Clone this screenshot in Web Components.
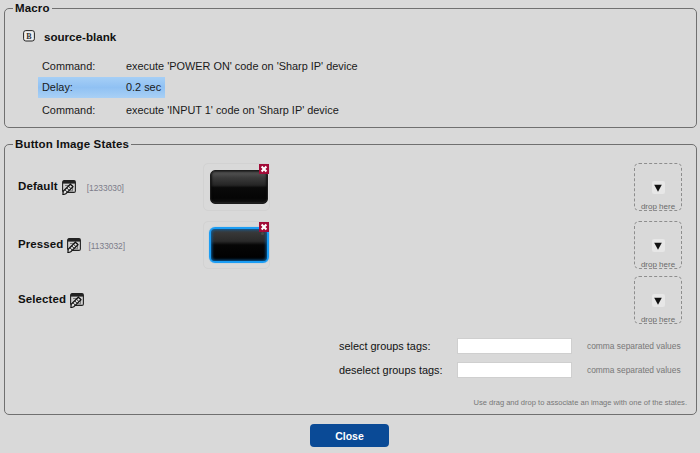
<!DOCTYPE html>
<html><head><meta charset="utf-8">
<style>
html,body{margin:0;padding:0;background:#d9d9d9}
body{width:700px;height:453px;overflow:hidden;font-family:"Liberation Sans",Arial,sans-serif;color:#111}
</style></head><body>
<template id="t-panel"><style>
:host{display:block;position:relative;box-sizing:border-box;border:1px solid #707070;border-radius:5px;margin:0 3px 0 4px}
.lg{position:absolute;left:8px;top:-8px;background:#d9d9d9;padding:0 2px;font:bold 11.5px/15px "Liberation Sans",sans-serif;color:#111;letter-spacing:.15px}
</style><div class="lg"><slot name="legend"></slot></div><slot></slot></template>

<template id="t-cmd"><style>
:host{display:grid;grid-template-columns:84px auto;width:max-content;height:22px;align-items:center;padding:0 4px;font:10.9px "Liberation Sans",sans-serif;color:#1a1a1a}
:host([hl]){background:linear-gradient(#a6cff6,#90c1f3 50%,#a9d0f5);min-width:118px;height:21px;margin-bottom:1px;padding-bottom:1px;box-sizing:border-box}
</style><span><slot name="k"></slot></span><span><slot></slot></span></template>

<template id="t-edit"><style>
:host{display:inline-block;width:14px;height:15px;vertical-align:middle}
svg{display:block}
</style><svg width="14" height="15" viewBox="0 0 14 15"><rect x=".6" y=".6" width="12.8" height="11.8" rx="1.5" fill="#d0d0d0" stroke="#222" stroke-width="1.1"/><rect x="1" y=".8" width="12" height="2.8" fill="#222"/><path d="M3 5.5h8M10.5 7v3.5M7 10.8h4" stroke="#777" stroke-width="1" fill="none"/><path d="M1.2 11.2L8.4 4.2l2.6 2.5-7.2 7.1-2.9 .9z" fill="#e4e4e4" stroke="#111" stroke-width="1.2"/><path d="M3 9.8l2.4 2.4M4.8 8l2.4 2.4M6.6 6.3L9 8.7" stroke="#222" stroke-width="1"/></svg></template>

<template id="t-thumb"><style>
:host{display:block;position:relative;box-sizing:border-box;width:67px;height:48px;border:1px solid #d2d2d2;border-radius:5px;background:#d9d9d9}
.b{position:absolute;left:6px;top:6px;width:58px;height:34px;border-radius:5px;box-sizing:border-box;border:1px solid #1c1c1c;
 background:linear-gradient(#5a5a5a 0,#3c3c3c 20%,#252525 44%,#0a0a0a 52%,#050505 85%,#141414 100%);box-shadow:inset 0 0 2px 1px rgba(10,10,10,.75),inset 0 -1px 1px #3a3a3a}
:host([active]) .b{left:5px;top:5px;width:60px;height:36px;border:2px solid #1b9df4;border-radius:6px;box-shadow:0 0 1px #4ab3f6,inset 0 0 3px 1px #0c5f9e;
 background:linear-gradient(#3d3d3d 0,#2a2a2a 38%,#060606 50%,#000 100%)}
:host([active]) .b::after{content:"";position:absolute;right:3px;top:3px;width:3px;height:3px;border-radius:50%;background:#4a4a4a}
.x{position:absolute;right:0;top:0;width:10px;height:10px;background:#a10b37}
svg{display:block}
</style><div class="b"></div><div class="x"><svg width="10" height="10" viewBox="0 0 10 10"><path d="M2.6 2.6l4.8 4.8M7.4 2.6L2.6 7.4" stroke="#fff" stroke-width="2.1"/></svg></div></template>

<template id="t-drop"><style>
:host{display:flex;flex-direction:column;align-items:center;box-sizing:border-box;width:48px;height:48px;border:1px dashed #8d8d8d;border-radius:5px;font:8px/10px "Liberation Sans",sans-serif;color:#6a6a6a}
.a{width:13px;height:13px;margin-top:17px;background:#e7e7e7;border-radius:2px;display:flex;align-items:center;justify-content:center;flex:none}
.t{margin-top:8px;white-space:nowrap}
svg{display:block}
</style><div class="a"><svg width="8" height="8" viewBox="0 0 8 8"><path d="M.2 .8h7.6L4 7.8z" fill="#111"/></svg></div><div class="t">drop here</div></template>

<template id="t-state"><style>
:host{display:grid;grid-template-columns:185px 431px 48px;align-items:start;padding-left:13px}
.l{display:flex;align-items:center;font:bold 11.5px/15px "Liberation Sans",sans-serif;color:#111;letter-spacing:.1px;margin-top:16px}
.id{font:8.4px "Liberation Sans",sans-serif;color:#7c7c8a;font-weight:normal;letter-spacing:0;position:relative;top:1.5px}
.l ::slotted(r-edit){margin-left:4px;position:relative;top:1px}
</style><div class="l"><slot name="name"></slot><span class="id"><slot name="id"></slot></span></div><div><slot name="thumb"></slot></div><div><slot name="drop"></slot></div></template>

<template id="t-tagrow"><style>
:host{display:grid;grid-template-columns:118px 115px auto;align-items:center;height:24px;margin-left:334px;font:10.9px "Liberation Sans",sans-serif;color:#111}
.i{box-sizing:border-box;width:115px;height:16px;background:#fff;border:1px solid #cfcfcf;display:block;margin:0;padding:0}
.n{font-size:8.4px;color:#777;margin-left:15px;white-space:nowrap;position:relative;top:-.5px}
</style><span><slot></slot></span><input class="i" type="text"><span class="n">comma separated values</span></template>

<template id="t-close"><style>
:host{display:block;box-sizing:border-box;width:79px;height:23px;border-radius:4px;background:#0a4a96;color:#fff;text-align:center;font:bold 10.5px/24px "Liberation Sans",sans-serif}
</style><slot></slot></template>

<template id="t-head"><style>
:host{display:flex;align-items:center;height:14px;font:bold 11.6px/14px "Liberation Sans",sans-serif;color:#111}
svg{display:block;margin-right:9px;position:relative;top:-1px}
</style><svg width="12" height="12" viewBox="0 0 12 12"><rect x=".6" y=".6" width="10.8" height="10.4" rx="2.2" fill="#eee" stroke="#222" stroke-width="1"/><text x="6" y="8.6" text-anchor="middle" font-family="Liberation Serif" font-weight="bold" font-size="8" fill="#333">B</text></svg><slot></slot></template>

<r-panel style="margin-top:8px;height:120px;padding-top:21px;padding-left:18px">
  <span slot="legend">Macro</span>
  <r-head>source-blank</r-head>
  <div style="height:11px"></div>
  <r-cmd style="margin-left:15px"><span slot="k">Command:</span>execute 'POWER ON' code on 'Sharp IP' device</r-cmd>
  <r-cmd hl style="margin-left:15px"><span slot="k">Delay:</span>0.2 sec</r-cmd>
  <r-cmd style="margin-left:15px"><span slot="k">Command:</span>execute 'INPUT 1' code on 'Sharp IP' device</r-cmd>
</r-panel>
<r-panel style="margin-top:16px;height:271px;padding-top:18px">
  <span slot="legend">Button Image States</span>
  <r-state><span slot="name">Default</span><r-edit slot="name"></r-edit><span slot="id" style="margin-left:11px">[1233030]</span><r-thumb slot="thumb"></r-thumb><r-drop slot="drop"></r-drop></r-state>
  <div style="height:10px"></div>
  <r-state><span slot="name">Pressed</span><r-edit slot="name"></r-edit><span slot="id" style="margin-left:7px">[1133032]</span><r-thumb active slot="thumb"></r-thumb><r-drop slot="drop"></r-drop></r-state>
  <div style="height:7px"></div>
  <r-state><span slot="name">Selected</span><r-edit slot="name"></r-edit><r-drop slot="drop"></r-drop></r-state>
  <div style="height:10px"></div>
  <r-tagrow>select groups tags:</r-tagrow>
  <r-tagrow>deselect groups tags:</r-tagrow>
  <div style="font:7.55px/10px 'Liberation Sans',sans-serif;color:#777;text-align:right;padding:16px 9px 0 0">Use drag and drop to associate an image with one of the states.</div>
</r-panel>
<div style="display:flex;justify-content:center;margin-top:9px;padding-right:1px"><r-close>Close</r-close></div>

<script>
const defs={'r-panel':'t-panel','r-cmd':'t-cmd','r-edit':'t-edit','r-thumb':'t-thumb','r-drop':'t-drop','r-state':'t-state','r-tagrow':'t-tagrow','r-close':'t-close','r-head':'t-head'};
for(const [n,t] of Object.entries(defs)){
  customElements.define(n,class extends HTMLElement{constructor(){super();this.attachShadow({mode:'open'}).appendChild(document.getElementById(t).content.cloneNode(true));}});
}
</script>
</body></html>
